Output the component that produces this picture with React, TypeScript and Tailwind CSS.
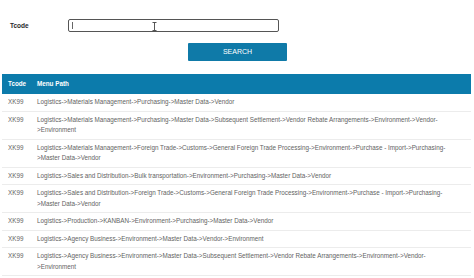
import React from "react";

const rows: string[][] = [
  ["Logistics->Materials Management->Purchasing->Master Data->Vendor"],
  [
    "Logistics->Materials Management->Purchasing->Master Data->Subsequent Settlement->Vendor Rebate Arrangements->Environment->Vendor-",
    ">Environment",
  ],
  [
    "Logistics->Materials Management->Foreign Trade->Customs->General Foreign Trade Processing->Environment->Purchase - Import->Purchasing-",
    ">Master Data->Vendor",
  ],
  ["Logistics->Sales and Distribution->Bulk transportation->Environment->Purchasing->Master Data->Vendor"],
  [
    "Logistics->Sales and Distribution->Foreign Trade->Customs->General Foreign Trade Processing->Environment->Purchase - Import->Purchasing-",
    ">Master Data->Vendor",
  ],
  ["Logistics->Production->KANBAN->Environment->Purchasing->Master Data->Vendor"],
  ["Logistics->Agency Business->Environment->Master Data->Vendor->Environment"],
  [
    "Logistics->Agency Business->Environment->Master Data->Subsequent Settlement->Vendor Rebate Arrangements->Environment->Vendor-",
    ">Environment",
  ],
];

export default function App() {
  return (
    <div
      className="w-[474px] h-[278px] overflow-hidden bg-white"
      style={{ fontFamily: '"Liberation Sans", Arial, sans-serif' }}
    >
      <div className="pt-[19px] pl-[10px]">
        <div className="flex items-center">
          <div className="w-[58px] text-[6.5px] font-bold text-[#2a2a2a]">Tcode</div>
          <div className="relative w-[211px] h-[13px] rounded-[2px] border-[1.5px] border-[#555] bg-white">
            <div className="absolute left-[3px] top-[2px] w-px h-[7px] bg-[#666]" />
            <svg
              className="absolute left-[83px] top-[2px]"
              width="5"
              height="9"
              viewBox="0 0 5 9"
            >
              <path d="M0.5 0.5 H4.5 M2.5 0.5 V8.5 M0.5 8.5 H4.5" stroke="#444" strokeWidth="0.9" fill="none" />
            </svg>
          </div>
        </div>
        <div className="mt-[11px] ml-[178px] w-[99px] h-[18px] bg-[#0f7aa8] rounded-[1px] flex items-center justify-center text-white text-[7px]">
          SEARCH
        </div>
      </div>
      <div className="mt-[13px] mx-[2px] w-[469px]">
        <div className="flex items-center h-[20px] bg-[#0c7bab] text-white text-[6.3px] font-bold">
          <div className="w-[35px] pl-[6px]">Tcode</div>
          <div>Menu Path</div>
        </div>
        {rows.map((lines, i) => (
          <div
            key={i}
            className="flex py-[3px] border-b border-[#ececec] text-[6.3px] leading-[10.5px] text-[#636363]"
          >
            <div className="w-[35px] pl-[6px]">XK99</div>
            <div className="whitespace-nowrap">
              {lines.map((l, j) => (
                <div key={j}>{l}</div>
              ))}
            </div>
          </div>
        ))}
      </div>
    </div>
  );
}
